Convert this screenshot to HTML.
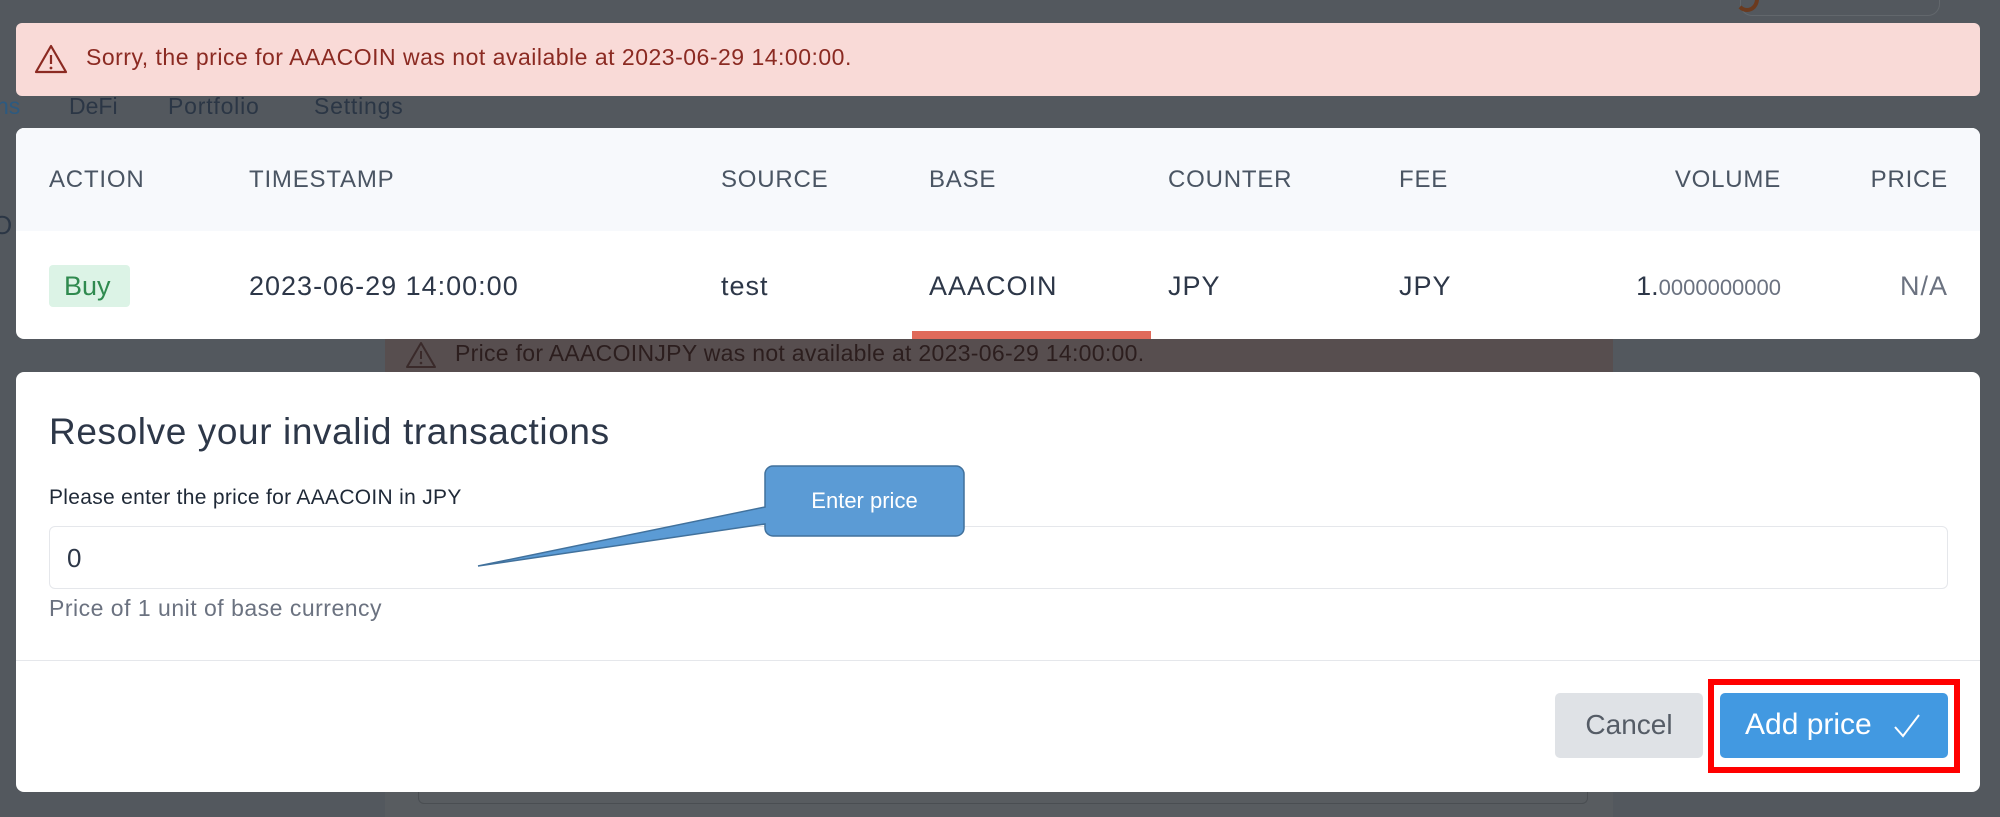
<!DOCTYPE html>
<html><head><meta charset="utf-8"><style>
*{box-sizing:border-box;margin:0;padding:0}
body{width:2000px;height:817px;overflow:hidden;background:#53585e;font-family:"Liberation Sans",sans-serif;position:relative}
.abs{position:absolute}
.t{position:absolute;white-space:nowrap;line-height:1}
.h{font-size:24px;color:#4a5563;letter-spacing:0.8px;top:168px}
.r{font-size:27px;color:#2d3748;letter-spacing:1px;top:273px}
</style></head><body>
<!-- background pieces -->
<div class="abs" style="left:385px;top:339px;width:1228px;height:478px;background:#585c60"></div>
<div class="abs" style="left:385px;top:339px;width:1228px;height:33px;background:#574e4f"></div>
<svg class="abs" style="left:405px;top:341px" width="32" height="28" viewBox="0 0 32 28"><path d="M16 2 L30 26 H2 Z" fill="none" stroke="#3a2a2a" stroke-width="2" stroke-linejoin="round"/><path d="M16 10v8" stroke="#3a2a2a" stroke-width="2"/><circle cx="16" cy="22" r="1.3" fill="#3a2a2a"/></svg>
<div class="t" style="left:455px;top:342px;font-size:23px;color:#2c1e1e;letter-spacing:0.3px">Price for AAACOINJPY was not available at 2023-06-29 14:00:00.</div>
<div class="abs" style="left:418px;top:792px;width:1170px;height:12px;border:1px solid #4a4e52;border-top:none;border-radius:0 0 6px 6px"></div>
<div class="t" style="left:-4px;top:95px;font-size:23px;color:#2d5a80">ns</div>
<div class="t" style="left:69px;top:95px;font-size:23px;color:#2b3645">DeFi</div>
<div class="t" style="left:168px;top:95px;font-size:23px;color:#2b3645;letter-spacing:0.8px">Portfolio</div>
<div class="t" style="left:314px;top:95px;font-size:23px;color:#2b3645;letter-spacing:0.8px">Settings</div>
<div class="t" style="left:-8px;top:212px;font-size:26px;color:#2b3645">O</div>
<div class="abs" style="left:1740px;top:-20px;width:200px;height:36px;border:1px solid #62676c;border-radius:12px"></div>
<div class="abs" style="left:1735px;top:-14px;width:24px;height:26px;border:4px solid #6b3a1e;border-radius:50%;border-left-color:transparent;border-top-color:transparent"></div>

<!-- alert -->
<div class="abs" style="left:16px;top:23px;width:1964px;height:73px;background:#f9dad7;border-radius:6px"></div>
<svg class="abs" style="left:34px;top:44px" width="34" height="30" viewBox="0 0 34 30"><path d="M17 2 L32 28 H2 Z" fill="none" stroke="#8b2a22" stroke-width="2.2" stroke-linejoin="round"/><path d="M17 11v9" stroke="#8b2a22" stroke-width="2.2"/><circle cx="17" cy="24" r="1.4" fill="#8b2a22"/></svg>
<div class="t" style="left:86px;top:46px;font-size:23px;color:#8b2a22;letter-spacing:0.5px">Sorry, the price for AAACOIN was not available at 2023-06-29 14:00:00.</div>

<!-- table card -->
<div class="abs" style="left:16px;top:128px;width:1964px;height:211px;background:#fff;border-radius:8px;overflow:hidden">
  <div class="abs" style="left:0;top:0;width:100%;height:103px;background:#f7f9fc"></div>
</div>
<div class="t h" style="left:49px">ACTION</div>
<div class="t h" style="left:249px">TIMESTAMP</div>
<div class="t h" style="left:721px">SOURCE</div>
<div class="t h" style="left:929px">BASE</div>
<div class="t h" style="left:1168px">COUNTER</div>
<div class="t h" style="left:1399px">FEE</div>
<div class="t h" style="right:219px">VOLUME</div>
<div class="t h" style="right:52px">PRICE</div>
<div class="abs" style="left:49px;top:265px;width:81px;height:42px;background:#dcf3e6;border-radius:4px"></div>
<div class="t" style="left:64px;top:273px;font-size:27px;color:#2f8a4f">Buy</div>
<div class="t r" style="left:249px">2023-06-29 14:00:00</div>
<div class="t r" style="left:721px">test</div>
<div class="t r" style="left:929px">AAACOIN</div>
<div class="t r" style="left:1168px">JPY</div>
<div class="t r" style="left:1399px">JPY</div>
<div class="t r" style="right:219px;letter-spacing:0">1.<span style="font-size:22px;color:#6b7280">0000000000</span></div>
<div class="t r" style="right:52px;color:#6b7280">N/A</div>
<div class="abs" style="left:912px;top:331px;width:239px;height:8px;background:#e06a5a"></div>

<!-- modal -->
<div class="abs" style="left:16px;top:372px;width:1964px;height:420px;background:#fff;border-radius:8px"></div>
<div class="t" style="left:49px;top:413px;font-size:37px;color:#2d3748;letter-spacing:0.6px">Resolve your invalid transactions</div>
<div class="t" style="left:49px;top:487px;font-size:21px;color:#1f2937;letter-spacing:0.3px">Please enter the price for AAACOIN in JPY</div>
<div class="abs" style="left:49px;top:526px;width:1899px;height:63px;border:1.5px solid #e5e7eb;border-radius:6px"></div>
<div class="t" style="left:67px;top:545px;font-size:26px;color:#2d3748">0</div>
<div class="t" style="left:49px;top:597px;font-size:23px;color:#6b7280;letter-spacing:0.5px">Price of 1 unit of base currency</div>
<div class="abs" style="left:16px;top:660px;width:1964px;height:1px;background:#e5e7eb"></div>
<div class="abs" style="left:1555px;top:693px;width:148px;height:65px;background:#dfe2e6;border-radius:5px"></div>
<div class="t" style="left:1555px;top:711px;width:148px;text-align:center;font-size:28px;color:#555c66">Cancel</div>
<div class="abs" style="left:1720px;top:693px;width:228px;height:65px;background:#4299e1;border-radius:5px"></div>
<div class="t" style="left:1745px;top:710px;font-size:30px;color:#fff">Add price</div>
<svg class="abs" style="left:1892px;top:712px" width="30" height="28" viewBox="0 0 30 28"><path d="M3 15 L11 24 L27 3" fill="none" stroke="#fff" stroke-width="2"/></svg>
<div class="abs" style="left:1708px;top:679px;width:252px;height:94px;border:6px solid #ff0000"></div>

<!-- callout -->
<svg class="abs" style="left:470px;top:460px" width="500" height="112" viewBox="470 460 500 112">
  <path d="M773 466 H956 a8 8 0 0 1 8 8 V528 a8 8 0 0 1 -8 8 H773 a8 8 0 0 1 -8 -8 V524 L478 566 L765 507 V474 a8 8 0 0 1 8 -8 Z" fill="#5b9bd5" stroke="#41719c" stroke-width="1.5"/>
</svg>
<div class="t" style="left:765px;top:490px;width:199px;text-align:center;font-size:22px;color:#fff">Enter price</div>
</body></html>
